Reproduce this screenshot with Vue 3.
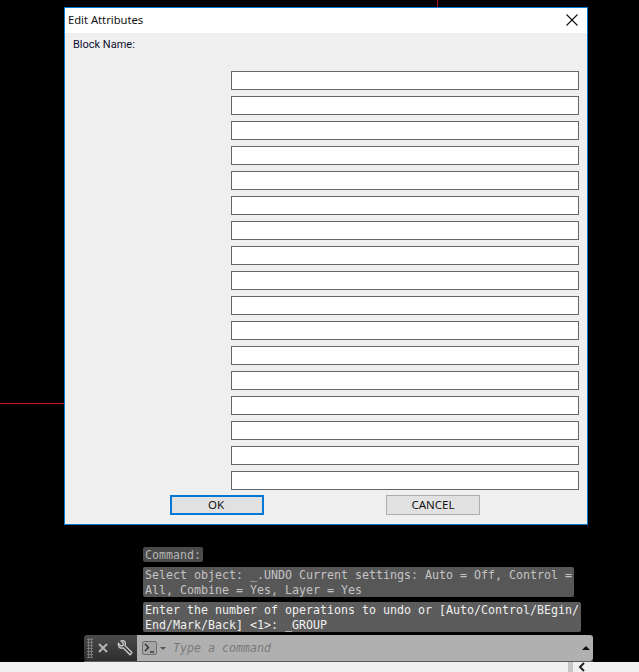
<script setup>
const fields = Array.from({ length: 17 }, (_, i) => i)
</script>

<template>
  <div class="screen">
    <span class="cross-v"></span>
    <span class="cross-h"></span>

    <section class="dialog">
      <header class="titlebar">
        <span class="title">Edit Attributes</span>
        <svg class="close" width="12" height="12" viewBox="0 0 12 12">
          <path d="M0.5 0.5 L11.5 11.5 M11.5 0.5 L0.5 11.5" stroke="#111" stroke-width="1.1" fill="none" />
        </svg>
      </header>
      <div class="body">
        <div class="block-name">Block Name:</div>
        <div class="fields">
          <input v-for="f in fields" :key="f" class="field" type="text" />
        </div>
        <div class="actions">
          <button class="btn primary">OK</button>
          <button class="btn cancel">CANCEL</button>
        </div>
      </div>
    </section>

    <div class="history">
      <div class="line single dim">Command:</div>
      <div class="line double wide-a">Select object: _.UNDO Current settings: Auto = Off, Control =<br />All, Combine = Yes, Layer = Yes</div>
      <div class="line double bright wide-b">Enter the number of operations to undo or [Auto/Control/BEgin/<br />End/Mark/Back] &lt;1&gt;: _GROUP</div>
    </div>

    <div class="cmdbar">
      <div class="tools">
        <span class="grip"></span>
        <svg class="x" width="10" height="10" viewBox="0 0 10 10">
          <path d="M1 1 L9 9 M9 1 L1 9" stroke="#b4b4b4" stroke-width="2" fill="none" />
        </svg>
        <svg class="wrench" width="16" height="16" viewBox="0 0 16 16">
          <path d="M1.5 3.5 L4 6 L6 5.5 L6.5 3.5 L4 1 C6 0.2 8 1 8.3 3 C8.5 4.2 8.3 5 8 5.6 L15 12.6 L13 14.8 L6 7.8 C5 8.3 3.8 8.3 2.8 7.6 C1.7 6.8 1.2 5 1.5 3.5 Z" fill="#3c3c3c" stroke="#cfcfcf" stroke-width="1.3" />
        </svg>
      </div>
      <div class="prompt">
        <span class="prompt-icon">
          <svg width="13" height="12" viewBox="0 0 13 12">
            <path d="M2 2 L5.5 5.5 L2 9" stroke="#222" stroke-width="1.2" fill="none" />
            <path d="M7 10 H11" stroke="#222" stroke-width="1.2" fill="none" />
          </svg>
        </span>
        <span class="caret"></span>
        <span class="placeholder">Type a command</span>
        <span class="up"></span>
      </div>
    </div>

    <footer class="statusbar">
      <span class="thumb"></span>
      <svg class="chev" width="8" height="10" viewBox="0 0 8 10">
        <path d="M6 1 L2 5 L6 9" stroke="#222" stroke-width="2" fill="none" />
      </svg>
    </footer>
  </div>
</template>

<style scoped>
.screen {
  position: relative;
  width: 639px;
  height: 672px;
  background: #000;
  overflow: hidden;
  display: flex;
  flex-direction: column;
}
.cross-v {
  position: absolute;
  left: 437px;
  top: 0;
  width: 1px;
  height: 7px;
  background: #b01010;
}
.cross-h {
  position: absolute;
  left: 0;
  top: 403px;
  width: 64px;
  height: 1px;
  background: #c81414;
}
.dialog {
  box-sizing: border-box;
  flex: none;
  width: 524px;
  height: 518px;
  margin: 7px 0 0 64px;
  border: 1px solid #0a78d0;
  background: #efefef;
  font-family: "Noto Sans", sans-serif;
  font-size: 11.5px;
  color: #111;
  display: flex;
  flex-direction: column;
}
.titlebar {
  flex: none;
  height: 25px;
  background: #fff;
  display: flex;
  align-items: center;
  justify-content: space-between;
  padding: 0 9px 1px 3px;
  box-sizing: border-box;
}
.title {
  font-size: 11.2px;
  line-height: 14px;
  margin-top: -1px;
}
.body {
  flex: 1;
  display: flex;
  flex-direction: column;
}
.block-name {
  flex: none;
  height: 38px;
  padding: 5px 0 0 8px;
  box-sizing: border-box;
  font-family: Roboto, sans-serif;
  font-size: 11px;
  line-height: 14px;
  color: #101030;
}
.fields {
  display: flex;
  flex-direction: column;
  gap: 6px;
  padding-left: 166px;
}
.field {
  box-sizing: border-box;
  width: 348px;
  height: 19px;
  margin: 0;
  padding: 0;
  background: #fff;
  border: 1px solid #666;
  border-radius: 0;
  outline: none;
}
.actions {
  display: flex;
  gap: 122px;
  padding: 5px 0 0 105px;
}
.btn {
  box-sizing: border-box;
  width: 94px;
  height: 20px;
  margin: 0;
  padding: 0 2px 0 0;
  background: #e1e1e1;
  border: 1px solid #adadad;
  border-radius: 0;
  font-family: "Noto Sans", sans-serif;
  font-size: 11.5px;
  color: #111;
  line-height: 16px;
}
.cancel {
  padding: 0;
}
.primary {
  border: 2px solid #0078d7;
}
.history {
  flex: none;
  display: flex;
  flex-direction: column;
  align-items: flex-start;
  gap: 5px;
  margin: 22px 0 0 143px;
  font-family: "DejaVu Sans Mono", monospace;
  font-size: 11.63px;
  line-height: 15px;
  color: #c4c4c4;
}
.line {
  box-sizing: border-box;
  flex: none;
  background: #575757;
  border-radius: 2px;
  padding: 1px 2px 0;
  white-space: nowrap;
}
.single {
  height: 15px;
}
.double {
  height: 30px;
}
.dim {
  color: #b4b4b4;
  background: #4a4a4a;
}
.wide-a {
  width: 431px;
}
.wide-b {
  width: 438px;
}
.bright {
  color: #f0f0f0;
  background: #5c5c5c;
}
.cmdbar {
  flex: none;
  display: flex;
  width: 509px;
  height: 26px;
  margin: 3px 0 0 84px;
  border-bottom: 1px solid #5a5a5a;
  box-sizing: content-box;
}
.tools {
  width: 53px;
  display: flex;
  align-items: center;
  gap: 5px;
  padding-left: 3px;
  box-sizing: border-box;
  background: linear-gradient(#4a4a4a, #2e2e2e);
  border-radius: 3px 0 0 3px;
}
.grip {
  width: 6px;
  height: 20px;
  background-image: radial-gradient(circle, #7c7c7c 1px, transparent 1.2px);
  background-size: 3px 3px;
}
.wrench {
  margin-left: 4px;
}
.prompt {
  flex: 1;
  display: flex;
  align-items: center;
  background: #b0b0b0;
  border-radius: 0 3px 3px 0;
  padding: 0 3px 0 5px;
  font-family: "DejaVu Sans Mono", monospace;
  font-size: 11.63px;
}
.prompt-icon {
  box-sizing: border-box;
  width: 15px;
  height: 14px;
  display: flex;
  align-items: center;
  justify-content: center;
  border: 1px solid #6e6e6e;
  border-radius: 2px;
  background: #a4a4a4;
}
.caret {
  width: 0;
  height: 0;
  margin-left: 3px;
  border-left: 3px solid transparent;
  border-right: 3px solid transparent;
  border-top: 3px solid #555;
}
.placeholder {
  flex: 1;
  margin-left: 7px;
  font-style: italic;
  color: #7a7a7a;
}
.up {
  width: 0;
  height: 0;
  border-left: 4px solid transparent;
  border-right: 4px solid transparent;
  border-bottom: 4px solid #111;
}
.statusbar {
  flex: 1;
  background: #f0f0f0;
  display: flex;
  align-items: flex-start;
  padding-left: 568px;
}
.thumb {
  width: 5px;
  height: 10px;
  background: #c6c6c6;
}
.chev {
  margin: 0 0 0 5px;
}
</style>
